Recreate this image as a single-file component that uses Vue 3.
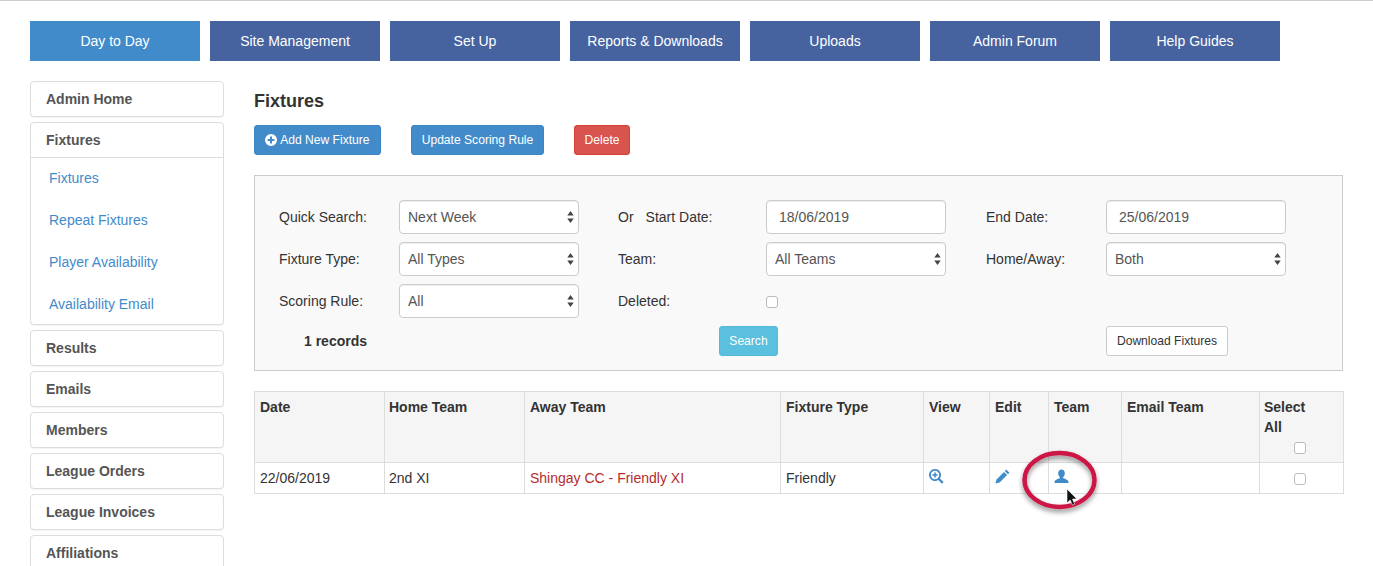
<script setup>
const navItems = ['Day to Day', 'Site Management', 'Set Up', 'Reports & Downloads', 'Uploads', 'Admin Forum', 'Help Guides']
const subLinks = ['Fixtures', 'Repeat Fixtures', 'Player Availability', 'Availability Email']
const lowerPanels = ['Results', 'Emails', 'Members', 'League Orders', 'League Invoices', 'Affiliations']
</script>

<template>
  <div class="page">
    <nav class="topnav">
      <a v-for="(item, i) in navItems" :key="item" class="topnav_item" :class="{ active: i === 0 }">{{ item }}</a>
    </nav>

    <div class="layout">
      <aside class="sidebar">
        <div class="panel"><div class="panel_title">Admin Home</div></div>
        <div class="panel">
          <div class="panel_title panel_title--open">Fixtures</div>
          <ul class="sublinks">
            <li v-for="link in subLinks" :key="link"><a>{{ link }}</a></li>
          </ul>
        </div>
        <div v-for="p in lowerPanels" :key="p" class="panel"><div class="panel_title">{{ p }}</div></div>
      </aside>

      <main class="content">
        <h1>Fixtures</h1>
        <div class="actions">
          <button class="btn btn-primary btn-add">
            <svg class="plus" viewBox="0 0 12 12" width="12" height="12">
              <path fill="#fff" fill-rule="evenodd" d="M6 0a6 6 0 1 1 0 12A6 6 0 0 1 6 0zM5 2.6v2.4H2.6v2H5v2.4h2V7h2.4V5H7V2.6z" />
            </svg>
            Add New Fixture
          </button>
          <button class="btn btn-primary btn-update">Update Scoring Rule</button>
          <button class="btn btn-danger">Delete</button>
        </div>

        <section class="filters">
          <div class="filter_row">
            <label class="lbl1">Quick Search:</label>
            <div class="select ctl1"><select><option>Next Week</option></select><svg viewBox="0 0 7 13" width="7" height="12"><path d="M3.5 0L7 5H0zM3.5 13L0 8h7z" /></svg></div>
            <label class="lbl2">Or<span class="start">Start Date:</span></label>
            <input class="input ctl2" value="18/06/2019" />
            <label class="lbl3">End Date:</label>
            <input class="input ctl3" value="25/06/2019" />
          </div>
          <div class="filter_row">
            <label class="lbl1">Fixture Type:</label>
            <div class="select ctl1"><select><option>All Types</option></select><svg viewBox="0 0 7 13" width="7" height="12"><path d="M3.5 0L7 5H0zM3.5 13L0 8h7z" /></svg></div>
            <label class="lbl2">Team:</label>
            <div class="select ctl2"><select><option>All Teams</option></select><svg viewBox="0 0 7 13" width="7" height="12"><path d="M3.5 0L7 5H0zM3.5 13L0 8h7z" /></svg></div>
            <label class="lbl3">Home/Away:</label>
            <div class="select ctl3"><select><option>Both</option></select><svg viewBox="0 0 7 13" width="7" height="12"><path d="M3.5 0L7 5H0zM3.5 13L0 8h7z" /></svg></div>
          </div>
          <div class="filter_row">
            <label class="lbl1">Scoring Rule:</label>
            <div class="select ctl1"><select><option>All</option></select><svg viewBox="0 0 7 13" width="7" height="12"><path d="M3.5 0L7 5H0zM3.5 13L0 8h7z" /></svg></div>
            <label class="lbl2">Deleted:</label>
            <div class="ctl2 check_cell"><span class="check"></span></div>
          </div>
          <div class="filter_foot">
            <strong class="records">1 records</strong>
            <button class="btn btn-info">Search</button>
            <button class="btn btn-default">Download Fixtures</button>
          </div>
        </section>

        <table class="grid">
          <colgroup>
            <col style="width:130px" /><col style="width:140px" /><col style="width:256px" /><col style="width:143px" />
            <col style="width:66px" /><col style="width:59px" /><col style="width:73px" /><col style="width:138px" /><col style="width:84px" />
          </colgroup>
          <thead>
            <tr>
              <th>Date</th><th>Home Team</th><th>Away Team</th><th>Fixture Type</th><th>View</th><th>Edit</th><th>Team</th><th>Email Team</th>
              <th>Select<br />All<span class="th_check"><span class="check"></span></span></th>
            </tr>
          </thead>
          <tbody>
            <tr>
              <td>22/06/2019</td>
              <td>2nd XI</td>
              <td class="away">Shingay CC - Friendly XI</td>
              <td>Friendly</td>
              <td>
                <svg class="ico" viewBox="0 0 15 15" width="15" height="15">
                  <path fill="#428bca" fill-rule="evenodd" d="M6 0a6 6 0 0 1 4.9 9.4l3.7 3.7-1.6 1.6-3.7-3.7A6 6 0 1 1 6 0zm0 1.8a4.2 4.2 0 1 0 0 8.4 4.2 4.2 0 0 0 0-8.4zM5.2 3.4h1.6v1.8h1.8v1.6H6.8v1.8H5.2V6.8H3.4V5.2h1.8z" />
                </svg>
              </td>
              <td>
                <svg class="ico" viewBox="0 0 15 15" width="15" height="15">
                  <path fill="#428bca" d="M11.3.6l3.1 3.1-1.5 1.5-3.1-3.1zM9 2.9L12.100 6 4.600 13.500.4 14.600l1.100-4.200z" />
                </svg>
              </td>
              <td>
                <svg class="ico" viewBox="0 0 15 15" width="15" height="15">
                  <path fill="#428bca" d="M7.500.5c2 0 3.300 1.600 3.300 3.700 0 1.600-.7 3-1.500 3.800-.4.400-.3 1 .2 1.200 1.800.8 4.200 1.500 4.800 2.800.2.500.2 1.500.2 2H.5c0-.5 0-1.500.2-2 .6-1.300 3-2 4.800-2.800.5-.2.600-.8.200-1.200-.8-.8-1.500-2.200-1.500-3.800C4.200 2.100 5.500.5 7.500.5z" />
                </svg>
              </td>
              <td></td>
              <td class="center"><span class="check"></span></td>
            </tr>
          </tbody>
        </table>
      </main>
    </div>

    <!-- annotation drawn over the screenshot -->
    <svg class="annotation" viewBox="0 0 100 86" width="100" height="86">
      <defs>
        <filter id="soft" x="-20%" y="-20%" width="140%" height="150%">
          <feDropShadow dx="0" dy="3" stdDeviation="2.5" flood-color="#000" flood-opacity="0.45" />
        </filter>
      </defs>
      <ellipse cx="49.5" cy="42" rx="35" ry="27" fill="none" stroke="#cc1444" stroke-width="4.5" filter="url(#soft)" />
      <path d="M57 51l0 14 3.200-3 2.200 5.200 2.300-1-2.200-5.100 4.300-.2z" fill="#111" stroke="#fff" stroke-width=".6" />
    </svg>
  </div>
</template>

<style>
html, body {
  margin: 0;
  background: #fff;
}
</style>

<style scoped>
* {
  box-sizing: border-box;
}

.page {
  position: relative;
  height: 566px;
  overflow: hidden;
  border-top: 1px solid #c9ced1;
  padding: 20px 0 0 30px;
  font-family: "Liberation Sans", Arial, sans-serif;
  font-size: 14px;
  color: #333;
}

.topnav {
  display: flex;
  gap: 10px;
}

.topnav_item {
  width: 170px;
  height: 40px;
  line-height: 40px;
  text-align: center;
  background: #4663a0;
  color: #fff;
}

.topnav_item.active {
  background: #428bca;
}

.layout {
  display: flex;
  gap: 30px;
  margin-top: 20px;
}

.sidebar {
  width: 194px;
  display: flex;
  flex-direction: column;
  gap: 5px;
  flex: none;
}

.panel {
  border: 1px solid #ddd;
  border-radius: 4px;
  box-shadow: 0 1px 1px rgba(0, 0, 0, 0.05);
  background: #fff;
}

.panel_title {
  height: 34px;
  line-height: 34px;
  padding-left: 15px;
  font-weight: bold;
  color: #555;
}

.panel_title--open {
  border-bottom: 1px solid #ddd;
  height: 35px;
}

.sublinks {
  list-style: none;
  margin: 0;
  padding: 0;
}

.sublinks li {
  height: 42px;
  line-height: 41px;
  padding-left: 18px;
  color: #428bca;
}

.sublinks li:last-child {
  height: 40px;
}

.content {
  width: 1089px;
  flex: none;
}

h1 {
  margin: 0;
  font-size: 18px;
  line-height: 20px;
  font-weight: bold;
  padding-top: 10px;
}

.actions {
  display: flex;
  gap: 30px;
  margin-top: 14px;
}

.btn {
  height: 30px;
  padding: 0 10px;
  font: 12.1px "Liberation Sans", Arial, sans-serif;
  line-height: 28px;
  border: 1px solid transparent;
  border-radius: 3px;
  color: #fff;
  white-space: nowrap;
}

.btn-add {
  width: 127px;
  padding: 0;
}

.btn-update {
  width: 133px;
  padding: 0;
}

.btn-primary {
  background: #428bca;
  border-color: #3d85c4;
}

.btn-danger {
  background: #d9534f;
  border-color: #d43f3a;
  width: 56px;
  padding: 0;
}

.btn-info {
  background: #5bc0de;
  border-color: #52bbd9;
}

.btn-default {
  background: #fff;
  border-color: #ccc;
  color: #333;
}

.plus {
  vertical-align: -2px;
}

.filters {
  margin-top: 20px;
  height: 196px;
  background: #f9f9f9;
  border: 1px solid #ccc;
  padding: 24px 0 0 24px;
}

.filter_row {
  display: flex;
  align-items: center;
  height: 34px;
  margin-bottom: 8px;
}

.filter_row label {
  flex: none;
}

.lbl1 {
  width: 120px;
}

.ctl1 {
  width: 180px;
}

.lbl2 {
  width: 148px;
  margin-left: 39px;
}

.start {
  margin-left: 12px;
}

.ctl2 {
  width: 180px;
}

.lbl3 {
  width: 120px;
  margin-left: 40px;
}

.ctl3 {
  width: 180px;
}

.input,
.select select {
  height: 34px;
  width: 100%;
  background: #fff;
  border: 1px solid #ccc;
  border-radius: 4px;
  padding: 0 8px;
  font: 14px "Liberation Sans", Arial, sans-serif;
  color: #555;
  box-shadow: inset 0 1px 1px rgba(0, 0, 0, 0.075);
}

.input {
  width: 180px;
  padding: 0 12px;
  flex: none;
}

.select {
  position: relative;
  flex: none;
}

.select select {
  display: block;
  appearance: none;
}

.select svg {
  position: absolute;
  right: 5px;
  top: 11px;
  fill: #444;
}

.check_cell {
  display: flex;
  align-items: center;
  padding-top: 2px;
}

.check {
  display: inline-block;
  width: 12px;
  height: 12px;
  border: 1px solid #bbb;
  border-radius: 3px;
  background: #fff;
  vertical-align: middle;
}

.filter_foot {
  position: relative;
  display: flex;
  align-items: center;
  height: 30px;
}

.records {
  margin-left: 25px;
  width: 415px;
}

.filter_foot .btn-info {
  width: 59px;
  padding: 0;
}

.filter_foot .btn-default {
  margin-left: 328px;
  width: 122px;
  padding: 0;
}

.grid {
  margin-top: 20px;
  width: 1089px;
  table-layout: fixed;
  border-collapse: collapse;
}

.grid th,
.grid td {
  border: 1px solid #ddd;
  padding: 5px;
  line-height: 20px;
  text-align: left;
  vertical-align: top;
}

.grid th:nth-child(2),
.grid td:nth-child(2),
.grid th:last-child {
  padding-left: 4px;
}

.grid th {
  background: #f5f5f5;
  height: 71px;
  color: #333;
}

.grid td {
  height: 31px;
  padding-top: 5px;
  padding-bottom: 4px;
}

.th_check {
  display: block;
  text-align: center;
  line-height: 14px;
  margin: 3px 3px 0 0;
}

.away {
  color: #b52b2b;
}

.center {
  text-align: center !important;
  padding-right: 8px !important;
}

.ico {
  display: inline-block;
  vertical-align: top;
  margin-top: 1px;
}

.annotation {
  position: absolute;
  left: 1010px;
  top: 437px;
}
</style>
